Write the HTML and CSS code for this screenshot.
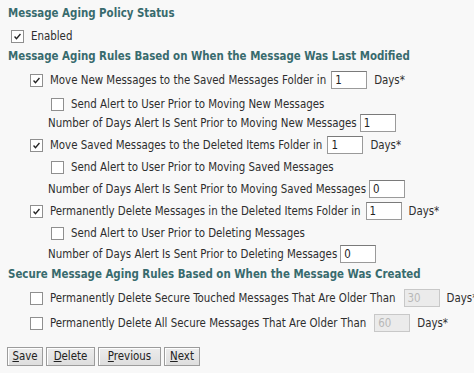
FILE: index.html
```html
<!DOCTYPE html>
<html>
<head>
<meta charset="utf-8">
<link rel="stylesheet" href="styles.css">
</head>
<body>
<div class="page">
  <div class="heading h1">Message Aging Policy Status</div>
  <div class="row r-enabled">
    <span class="cb checked"><svg viewBox="0 0 13 13"><path d="M3 6.5 L5.3 9 L10 3.6" /></svg></span>
    <span class="lbl">Enabled</span>
  </div>
  <div class="heading h2">Message Aging Rules Based on When the Message Was Last Modified</div>

  <div class="row lvl1 r1">
    <span class="cb checked"><svg viewBox="0 0 13 13"><path d="M3 6.5 L5.3 9 L10 3.6" /></svg></span>
    <span class="lbl">Move New Messages to the Saved Messages Folder in</span>
    <span class="field">1</span>
    <span class="days">Days*</span>
  </div>
  <div class="row lvl2 rsub1">
    <span class="cb"></span>
    <span class="lbl">Send Alert to User Prior to Moving New Messages</span>
  </div>
  <div class="row lvl1n rnum1">
    <span class="lbl">Number of Days Alert Is Sent Prior to Moving New Messages</span>
    <span class="field tight">1</span>
  </div>

  <div class="row lvl1">
    <span class="cb checked"><svg viewBox="0 0 13 13"><path d="M3 6.5 L5.3 9 L10 3.6" /></svg></span>
    <span class="lbl">Move Saved Messages to the Deleted Items Folder in</span>
    <span class="field">1</span>
    <span class="days">Days*</span>
  </div>
  <div class="row lvl2">
    <span class="cb"></span>
    <span class="lbl">Send Alert to User Prior to Moving Saved Messages</span>
  </div>
  <div class="row lvl1n">
    <span class="lbl">Number of Days Alert Is Sent Prior to Moving Saved Messages</span>
    <span class="field tight">0</span>
  </div>

  <div class="row lvl1">
    <span class="cb checked"><svg viewBox="0 0 13 13"><path d="M3 6.5 L5.3 9 L10 3.6" /></svg></span>
    <span class="lbl">Permanently Delete Messages in the Deleted Items Folder in</span>
    <span class="field">1</span>
    <span class="days">Days*</span>
  </div>
  <div class="row lvl2">
    <span class="cb"></span>
    <span class="lbl">Send Alert to User Prior to Deleting Messages</span>
  </div>
  <div class="row lvl1n rnum3">
    <span class="lbl">Number of Days Alert Is Sent Prior to Deleting Messages</span>
    <span class="field tight">0</span>
  </div>

  <div class="heading h3">Secure Message Aging Rules Based on When the Message Was Created</div>
  <div class="row lvl1 rs1">
    <span class="cb"></span>
    <span class="lbl">Permanently Delete Secure Touched Messages That Are Older Than</span>
    <span class="field disabled wide">30</span>
    <span class="days">Days*</span>
  </div>
  <div class="row lvl1 rs2">
    <span class="cb"></span>
    <span class="lbl">Permanently Delete All Secure Messages That Are Older Than</span>
    <span class="field disabled wide">60</span>
    <span class="days">Days*</span>
  </div>

  <div class="buttons">
    <span class="btn b-save"><u>S</u>ave</span>
    <span class="btn b-delete"><u>D</u>elete</span>
    <span class="btn b-prev"><u>P</u>revious</span>
    <span class="btn b-next"><u>N</u>ext</span>
  </div>
</div>
</body>
</html>
```
FILE: styles.css
```css
html, body {
  margin: 0;
  padding: 0;
  background: #f8f8f8;
}
body {
  font-family: "DejaVu Sans Condensed", "DejaVu Sans", sans-serif;
  font-size: 11.4px;
  color: #2e2e2e;
  width: 474px;
  height: 373px;
  overflow: hidden;
}
.page {
  padding: 6px 0 0 8px;
  white-space: nowrap;
}
.heading {
  font-weight: bold;
  color: #386b6e;
  height: 15px;
  line-height: 15px;
}
.h2 { margin-top: 2px; }
.h3 { margin-top: 3px; }
.row {
  display: flex;
  align-items: center;
  height: 20px;
  margin-top: 2px;
}
.r-enabled { margin-top: 4px; height: 22px; padding-left: 3px; }
.lvl1 { padding-left: 22px; }
.lvl2 { padding-left: 43px; }
.lvl1n { padding-left: 40px; }
.r1 { margin-top: 6px; }
.rsub1 { margin-top: 4px; }
.rnum1 { margin-top: -1px; }
.rnum3 { margin-top: 1px; }
.rs1 { margin-top: 6px; }
.rs2 { margin-top: 5px; }
.cb {
  width: 11px;
  height: 11px;
  border: 1px solid #8f8f8f;
  background: #fff;
  margin-right: 7px;
  flex: none;
  display: flex;
}
.cb svg {
  width: 11px;
  height: 11px;
}
.cb svg path {
  fill: none;
  stroke: #222;
  stroke-width: 1.6;
}
.field {
  width: 31px;
  height: 16px;
  line-height: 16px;
  border: 1px solid #9a9a9a;
  border-top-color: #7a7a7a;
  background: #fff;
  margin-left: 5px;
  padding-left: 3px;
  color: #222;
  flex: none;
}
.field.tight { margin-left: 3px; }
.field.wide { margin-left: 8px; }
.field.disabled {
  background: #ebebeb;
  color: #b8b8b8;
  border-color: #c8c8c8;
}
.days {
  margin-left: 7px;
}
.buttons {
  display: flex;
  gap: 3px;
  margin-top: 14px;
  margin-left: -1px;
}
.btn {
  box-sizing: border-box;
  height: 19px;
  line-height: 17px;
  text-align: center;
  border: 1px solid #9c9c9c;
  background: linear-gradient(#ececec, #dedede);
  box-shadow: inset 1px 1px 0 #fff;
  color: #222;
}
.b-save { width: 36px; }
.b-delete { width: 49px; }
.b-prev { width: 63px; }
.b-next { width: 36px; }
.btn u { text-decoration: underline; }
```
